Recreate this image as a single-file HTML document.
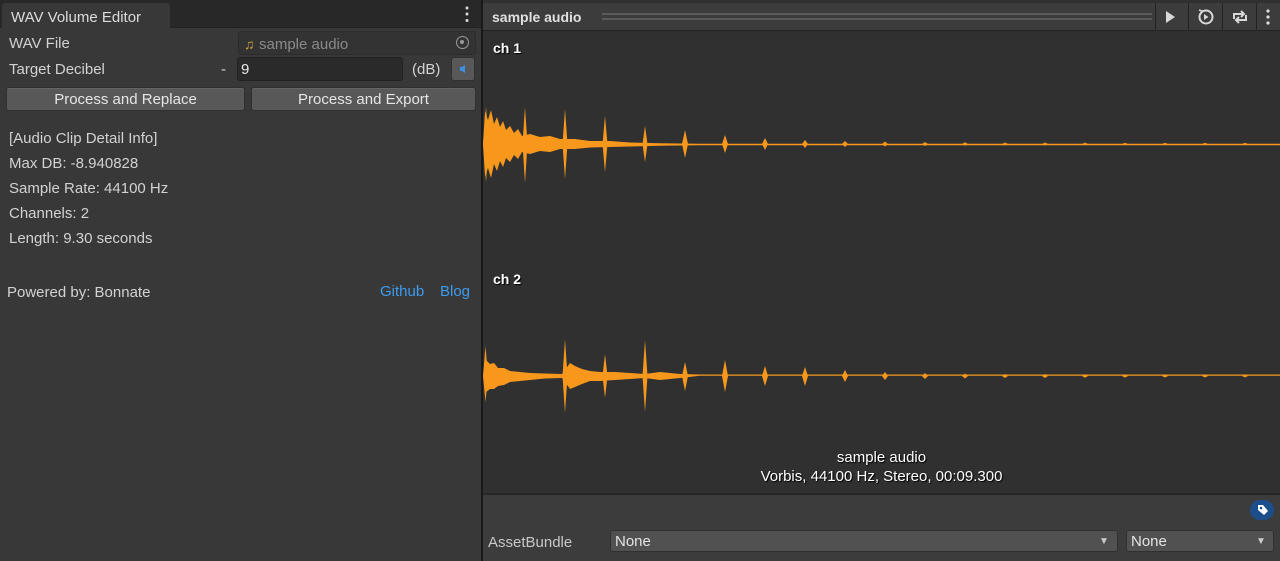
<!DOCTYPE html>
<html><head><meta charset="utf-8"><style>
*{box-sizing:border-box;margin:0;padding:0}
body{width:1280px;height:561px;overflow:hidden;background:#191919;font-family:"Liberation Sans",sans-serif;font-size:15px;color:#d2d2d2;position:relative}
.abs{position:absolute}
.left{left:0;top:0;width:481px;height:561px;background:#383838}
.tabbar{left:0;top:0;width:481px;height:28px;background:#282828;border-bottom:1px solid #232323}
.tab{left:2px;top:3px;width:168px;height:26px;background:#383838;border-radius:3px 3px 0 0;padding:6px 9px;color:#dcdcdc}
.lbl{white-space:nowrap}
.field{background:#2a2a2a;border:1px solid #212121;border-radius:3px}
.btn{background:#585858;border:1px solid #303030;border-radius:3px;text-align:center;color:#e6e6e6;height:24px;line-height:24px;box-shadow:inset 0 1px 0 #656565}
.right{left:483px;top:0;width:797px;height:561px;background:#303030}
.rhead{left:483px;top:3px;width:797px;height:28px;background:#3c3c3c;border-bottom:1px solid #232323}
.bottom{left:483px;top:493px;width:797px;height:68px;background:#3c3c3c;border-top:2px solid #262626}
.dd{background:#515151;border:1px solid #303030;border-radius:3px;height:22px;padding:2px 4px;color:#e4e4e4}
</style></head><body>
<div class="abs left"></div>
<div class="abs tabbar"></div>
<div class="abs tab">WAV Volume Editor</div>
<div class="abs lbl" style="left:458px;top:5px;font-size:18px;font-weight:bold;color:#ddd;line-height:18px">&#8942;</div>

<div class="abs lbl" style="left:9px;top:35px">WAV File</div>
<div class="abs field" style="left:238px;top:31px;width:238px;height:24px;background:#333;border-color:#2c2c2c"></div>
<div class="abs lbl" style="left:244px;top:36px;color:#c9a23a;font-size:14px">&#9835;</div>
<div class="abs lbl" style="left:259px;top:36px;color:#8a8a8a">sample audio</div>
<div class="abs" style="left:456px;top:36px;width:13px;height:13px;border:1.5px solid #9a9a9a;border-radius:50%"><div style="position:absolute;left:3px;top:3px;width:4px;height:4px;background:#9a9a9a;border-radius:50%"></div></div>

<div class="abs lbl" style="left:9px;top:61px">Target Decibel</div>
<div class="abs lbl" style="left:221px;top:61px">-</div>
<div class="abs field" style="left:237px;top:57px;width:166px;height:24px;padding:3px 3px;color:#e8e8e8">9</div>
<div class="abs lbl" style="left:412px;top:61px">(dB)</div>
<div class="abs" style="left:451px;top:57px;width:24px;height:24px;background:#585858;border-radius:3px;border:1px solid #303030"><svg width="22" height="22"><path d="M8 9h2l3-2v8l-3-2H8z" fill="#3d8ee0"/></svg></div>

<div class="abs btn" style="left:6px;top:87px;width:239px">Process and Replace</div>
<div class="abs btn" style="left:251px;top:87px;width:225px">Process and Export</div>

<div class="abs lbl" style="left:9px;top:130px">[Audio Clip Detail Info]</div>
<div class="abs lbl" style="left:9px;top:155px">Max DB: -8.940828</div>
<div class="abs lbl" style="left:9px;top:180px">Sample Rate: 44100 Hz</div>
<div class="abs lbl" style="left:9px;top:205px">Channels: 2</div>
<div class="abs lbl" style="left:9px;top:230px">Length: 9.30 seconds</div>
<div class="abs lbl" style="left:7px;top:284px">Powered by: Bonnate</div>
<div class="abs lbl" style="left:380px;top:283px;color:#3c9cf0">Github</div>
<div class="abs lbl" style="left:440px;top:283px;color:#3c9cf0">Blog</div>

<div class="abs right"></div>
<div class="abs rhead"></div>
<div class="abs lbl" style="left:492px;top:9px;color:#e0e0e0;font-weight:bold;font-size:14px">sample audio</div>
<div class="abs" style="left:602px;top:13px;width:550px;height:7px;border-top:2px solid #5a5a5a;border-bottom:2px solid #5a5a5a"></div>
<div class="abs" style="left:1155px;top:3px;width:1px;height:28px;background:#232323"></div>
<div class="abs" style="left:1188px;top:3px;width:1px;height:28px;background:#232323"></div>
<div class="abs" style="left:1222px;top:3px;width:1px;height:28px;background:#232323"></div>
<div class="abs" style="left:1256px;top:3px;width:1px;height:28px;background:#232323"></div>
<svg class="abs" style="left:1155px;top:3px" width="125" height="28">
<path d="M11 8v12l9-6z" fill="#d8d8d8"/>
<circle cx="51" cy="14" r="6.5" fill="none" stroke="#d8d8d8" stroke-width="2"/><path d="M49 11v6l4.5-3z" fill="#d8d8d8"/><path d="M44 7l3 1-1 3" fill="none" stroke="#d8d8d8" stroke-width="1.5"/>
<path d="M79 16v-5h10M86 8l3 3-3 3M91 12v5H81M84 20l-3-3 3-3" fill="none" stroke="#d8d8d8" stroke-width="2"/>
<circle cx="113" cy="8" r="1.6" fill="#ddd"/><circle cx="113" cy="14" r="1.6" fill="#ddd"/><circle cx="113" cy="20" r="1.6" fill="#ddd"/>
</svg>

<div class="abs lbl" style="left:493px;top:40px;color:#fff;font-weight:bold;font-size:14px;text-shadow:1px 1px 1px #000">ch 1</div>
<div class="abs lbl" style="left:493px;top:271px;color:#fff;font-weight:bold;font-size:14px;text-shadow:1px 1px 1px #000">ch 2</div>

<svg class="abs" style="left:0;top:0" width="1280" height="561">
<g fill="#f7981d">
<path d="M483 144 L485 112 488 120 491 110 494 124 497 117 500 127 503 121 506 130 510 126 514 133 518 129 522 136 530 134 540 137 550 136 560 139 575 139 590 141 610 141 630 142.5 660 143.3 700 143.8 1280 143.8 L1280 145.2 700 145.2 660 145.7 630 146.5 610 147 590 147.5 575 149 560 149 550 152 540 151 530 154 522 152 518 159 514 155 510 162 506 158 503 167 500 161 497 171 494 164 491 178 488 168 485 176 Z"/>
<path d="M483 144 L486 107 489 144 486 182Z M522.5 144 L525 107 527.5 144 525 183Z M562.5 144 L565 109 567.5 144 565 179Z M602.5 144 L605 116 607.5 144 605 172Z M642.5 144 L645 126 647.5 144 645 162Z M682 144 L685 130 688 144 685 158Z M722 144 L725 135 728 144 725 153Z M762 144 L765 138 768 144 765 150Z M802 144 L805 140 808 144 805 148Z M842 144 L845 141 848 144 845 147Z M882 144 L885 141.5 888 144 885 146.5Z M922 144 L925 142 928 144 925 146Z M962 144 L965 142.3 968 144 965 145.7Z M1002 144 L1005 142.5 1008 144 1005 145.5Z M1042 144 L1045 142.5 1048 144 1045 145.5Z M1082 144 L1085 142.6 1088 144 1085 145.4Z M1122 144 L1125 142.7 1128 144 1125 145.3Z M1162 144 L1165 142.7 1168 144 1165 145.3Z M1202 144 L1205 142.8 1208 144 1205 145.2Z M1242 144 L1245 142.8 1248 144 1245 145.2Z"/>
<path d="M483 376 L486 360 490 364 494 363 498 368 504 368 510 371 520 372 530 373 545 373.5 562 374 570 363 575 366 582 369 590 371 600 372 615 372 630 373 645 374 660 372 680 374 700 374.5 1280 374.5 L1280 375.8 700 375.8 680 378 660 380 645 378 630 379 615 380 600 381 590 381 582 384 575 387 570 389 562 378 545 378.5 530 380 520 381 510 382 504 385 498 386 494 389 490 389 486 392 Z"/>
<path d="M483 376 L485.5 346 488 376 485.5 402Z M562.5 376 L565 339 567.5 376 565 413Z M602.5 376 L605 354 607.5 376 605 398Z M642.5 376 L645 340 647.5 376 645 412Z M682 376 L685 362 688 376 685 391Z M722 376 L725 360 728 376 725 392Z M762 376 L765 366 768 376 765 386Z M802 376 L805 367 808 376 805 386Z M842 376 L845 370 848 376 845 382Z M882 376 L885 372 888 376 885 380Z M922 376 L925 373 928 376 925 379Z M962 376 L965 373.5 968 376 965 378.5Z M1002 376 L1005 374 1008 376 1005 378Z M1042 376 L1045 374 1048 376 1045 378Z M1082 376 L1085 374.3 1088 376 1085 377.7Z M1122 376 L1125 374.4 1128 376 1125 377.6Z M1162 376 L1165 374.5 1168 376 1165 377.5Z M1202 376 L1205 374.5 1208 376 1205 377.5Z M1242 376 L1245 374.6 1248 376 1245 377.4Z"/>
</g></svg>

<div class="abs lbl" style="left:483px;top:449px;width:797px;text-align:center;color:#fff;font-size:15px;text-shadow:1px 1px 1px #000">sample audio</div>
<div class="abs lbl" style="left:483px;top:468px;width:797px;text-align:center;color:#fff;font-size:15px;text-shadow:1px 1px 1px #000">Vorbis, 44100 Hz, Stereo, 00:09.300</div>

<div class="abs bottom"></div>
<div class="abs" style="left:1250px;top:500px;width:24px;height:20px;background:#1d4e8c;border-radius:10px"></div>
<svg class="abs" style="left:1250px;top:500px" width="24" height="20"><path d="M8 5h5l5 6-4 4-6-5z" fill="#fff"/><circle cx="11" cy="8" r="1.3" fill="#1d4e8c"/></svg>
<div class="abs lbl" style="left:488px;top:534px;color:#c8c8c8">AssetBundle</div>
<div class="abs dd" style="left:610px;top:530px;width:508px">None</div>
<div class="abs lbl" style="left:1099px;top:536px;font-size:10px;color:#ccc">&#9660;</div>
<div class="abs dd" style="left:1126px;top:530px;width:148px">None</div>
<div class="abs lbl" style="left:1256px;top:536px;font-size:10px;color:#ccc">&#9660;</div>
</body></html>
